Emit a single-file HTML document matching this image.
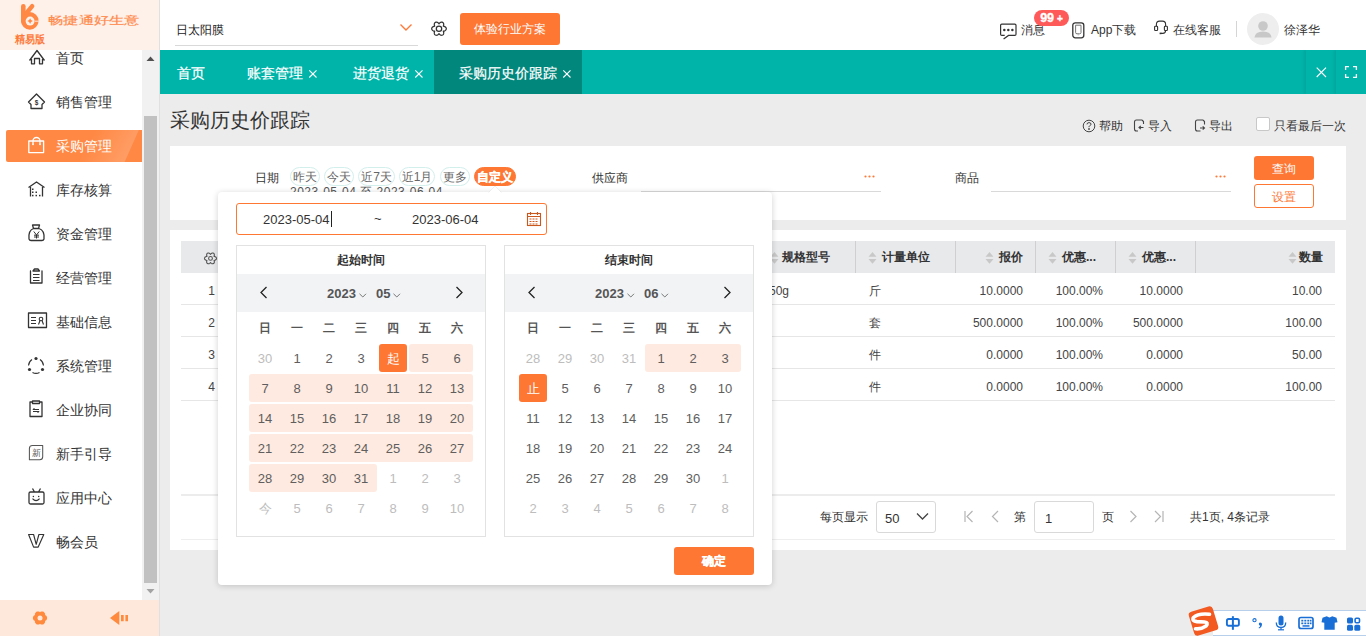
<!DOCTYPE html>
<html><head><meta charset="utf-8">
<style>
*{box-sizing:border-box;margin:0;padding:0}
html,body{width:1366px;height:636px;overflow:hidden;background:#ececec;font-family:"Liberation Sans",sans-serif;color:#333}
.a{position:absolute;white-space:nowrap}
svg{position:absolute;overflow:visible}
/* sidebar */
#sb{position:absolute;left:0;top:0;width:160px;height:636px;background:#fff;border-right:1px solid #e0e0e0}
#logo{position:absolute;left:0;top:0;width:159px;height:50px;background:#fef1ea}
.mi{position:absolute;left:56px;font-size:14px;line-height:16px;color:#333}
#act{position:absolute;left:6px;top:130px;width:136px;height:32px;border-radius:2px 0 0 2px;background:#ff8844;overflow:hidden}
#sbb{position:absolute;left:0;top:600px;width:159px;height:36px;background:#fee8dc}
/* header */
#hd{position:absolute;left:160px;top:0;width:1206px;height:50px;background:#fff}
#tabs{position:absolute;left:160px;top:50px;width:1206px;height:44px;background:#00b4a9;overflow:hidden}
.tb{position:absolute;top:15px;font-size:14px;line-height:16px;color:#fff;-webkit-text-stroke:0.2px #fff}
.panel{position:absolute;background:#fff}
.pill{position:absolute;top:167px;height:19px;border:1px solid #d2efec;border-radius:10px;font-size:12px;line-height:19px;color:#666;text-align:center}
.th{position:absolute;top:241px;height:32px;font-size:12px;font-weight:bold;line-height:32px;color:#333}
.td{position:absolute;font-size:12px;line-height:14px;color:#444}
.sep{position:absolute;top:241px;width:1px;height:32px;background:#cfcfcf}
.rowl{position:absolute;left:181px;width:1154px;height:1px;background:#e6e6e6}
.d{position:absolute;width:28px;height:28px;font-size:13px;line-height:30px;text-align:center;color:#5e5e5e}
.g{color:#bdbdbd}
.wk{position:absolute;top:320px;width:28px;font-size:12px;line-height:16px;text-align:center;color:#555;font-weight:bold}
.rng{position:absolute;height:28px;background:#feeae0;border-radius:3px}
.sel{position:absolute;width:28px;height:28px;background:#fe7733;border-radius:3px}
</style></head><body>

<!-- SIDEBAR -->
<div id="sb">
  <div id="logo">
    <svg width="160" height="50" style="left:0;top:0">
      <circle cx="29.8" cy="20.9" r="8.8" fill="#ff8844"/>
      <path d="M23.3 6.3 V21" stroke="#ff8844" stroke-width="4.6" stroke-linecap="round"/>
      <path d="M26.5 13 L32.2 6.2" stroke="#ff8844" stroke-width="4.4" stroke-linecap="round"/>
      <circle cx="30.1" cy="21.1" r="4.5" fill="#fef1ea"/>
      <path d="M38.8 21.2 H35" stroke="#fef1ea" stroke-width="0.9"/>
      <path d="M30.1 18.3 Q30.6 20.6 32.9 21.1 Q30.6 21.6 30.1 23.9 Q29.6 21.6 27.3 21.1 Q29.6 20.6 30.1 18.3Z" fill="#ff8844"/>
    </svg>
    <div class="a" style="left:48px;top:12px;font-size:15.3px;line-height:16px;font-weight:500;color:#ff8a4c;letter-spacing:0.3px;-webkit-text-stroke:0.25px #ff8a4c;transform:scaleY(0.72);transform-origin:0 50%">畅捷通好生意</div>
    <div class="a" style="left:15px;top:33px;font-size:9.8px;line-height:13px;font-weight:bold;color:#ff7a3a;transform:scaleY(1.1);transform-origin:0 50%">精易版</div>
  </div>
  <div id="act">
    <div style="position:absolute;left:0;top:0;width:136px;height:32px;background:linear-gradient(120deg,rgba(255,255,255,0) 58%,rgba(255,255,255,0.22) 95%);clip-path:polygon(0 0,132.8px 0,118.6px 32px,0 32px)"></div>
  </div>
  <!-- icons -->
  <svg width="160" height="560" style="left:0;top:40px" fill="none" stroke="#333" stroke-width="1.3" stroke-linejoin="round">
    <!-- home y50-64 -->
    <path d="M29.5 20.5 L37 10.5 L44.5 20.5 M31.5 19 V23.8 H34.5 V18.5 H39.5 V23.8 H42.5 V19" transform="translate(0,0)"/>
    <!-- shop 94-108 -->
    <path d="M28.5 62 L36.5 54 L44.5 62 L42 64.5 L42 68.5 L31 68.5 L31 64.5 Z"/>
    <text x="36.5" y="64.5" font-size="6.5" fill="#333" stroke="none" text-anchor="middle" font-weight="bold" font-family="Liberation Sans">$</text>
    <!-- bag (white) -->
    <path d="M28.8 101 H43.6 V112.6 H28.8 Z M33 104 V101 A3.5 3.5 0 0 1 40 101 V104" stroke="#fff"/><circle cx="33" cy="104.3" r="0.9" fill="#fff" stroke="none"/><circle cx="40" cy="104.3" r="0.9" fill="#fff" stroke="none"/>
    <g transform="translate(0,-3)"><!-- warehouse 181-197 -->
    <path d="M28.5 150.5 L36.5 145 L44.5 150.5 M30.5 150 V159.5 M42.5 150 V159.5" />
    <g fill="#333" stroke="none"><rect x="32" y="151.5" width="1.5" height="1.5"/><rect x="32" y="154.5" width="1.5" height="1.5"/><rect x="35.5" y="154.5" width="1.5" height="1.5"/><rect x="32" y="157.8" width="1.5" height="1.5"/><rect x="35.5" y="157.8" width="1.5" height="1.5"/><rect x="39" y="157.8" width="1.5" height="1.5"/></g>
    </g><!-- money bag 225-241 -->
    <path d="M32.5 185 H39.5 L38.5 188.5 H33.5 Z M33.5 188.5 C29 190 28.5 194 29 199 Q29.5 200.5 31 200.5 H42 Q43.5 200.5 44 199 C44.5 194 44 190 39 188.5"/>
    <path d="M33.8 191.5 L36.5 195 L39.2 191.5 M36.5 195 V198.5 M34 195.2 H39 M34 197 H39" stroke-width="1"/>
    <!-- clipboard 269-285 -->
    <path d="M31 231 H30.5 V243 H42 V231 H41.5 M33 231 L34.5 229 H38 L39.5 231 Z"/>
    <path d="M33 234.5 H39.5 M33 237.5 H39.5 M33 240.5 H39.5" stroke-width="1.1"/>
    <!-- id card -->
    <path d="M28.5 273 H46.5 V287.5 H28.5 Z"/>
    <path d="M31 277.5 H36 M31 280.5 H36 M31 283.5 H36" stroke-width="1.1"/>
    <circle cx="41" cy="279" r="1.8" stroke-width="1.1"/><path d="M38.5 284.5 L40 280.5 M43.5 284.5 L42 280.5" stroke-width="1.1"/>
    <!-- system -->
    <g fill="#333" stroke="none"><circle cx="36" cy="318.5" r="1.6"/><circle cx="29.5" cy="329.5" r="1.6"/><circle cx="42.5" cy="329.5" r="1.6"/></g>
    <path d="M32 319.5 A8 8 0 0 0 28.5 325.5 M40 319.5 A8 8 0 0 1 43.5 325.5 M32.5 332.5 Q36 334.3 39.5 332.5" stroke-width="1.1"/>
    <!-- enterprise clipboard -->
    <path d="M32.5 362 H30 V376.5 H42 V362 H39.5 M32.5 361 H39.5 V363.5 H32.5 Z"/>
    <path d="M33 369.5 H39 M34.5 368 L33 369.5 M33 371.5 H39 L37.5 373" stroke-width="1"/>
    <g transform="translate(0,3)"><!-- new -->
    <path d="M29.4 405.5 A3 3 0 0 1 32.4 402.5 H42.7 V413.7 A3 3 0 0 1 39.7 416.7 H29.4 Z" stroke="#555" stroke-width="1.05"/>
    <text x="36.1" y="413.3" font-size="8.5" fill="#555" stroke="none" text-anchor="middle" font-family="Liberation Sans">新</text>
    </g><g transform="translate(0,4)"><!-- app tv -->
    <path d="M30.5 448 H42.5 Q44 448 44 449.5 V458.5 Q44 460 42.5 460 H30.5 Q29 460 29 458.5 V449.5 Q29 448 30.5 448 Z M32.5 444.5 L34.5 448 M40.5 444.5 L38.5 448"/>
    <circle cx="33.4" cy="452.4" r="0.75" fill="#333" stroke="none"/><circle cx="38.7" cy="452.4" r="0.75" fill="#333" stroke="none"/><path d="M32.5 454.6 Q36 458.6 39.6 454.6" stroke-width="1.1"/>
    </g><g transform="translate(0,4.5)"><!-- V -->
    <path d="M28.6 490 H33.6 L36.2 499.8 L38.9 490 H43.8 L38.2 502.6 H33.6 Z" stroke-width="1.15"/>
  </g></svg>
  <div class="mi" style="top:50px">首页</div>
  <div class="mi" style="top:94px">销售管理</div>
  <div class="mi" style="top:138px;color:#fff">采购管理</div>
  <div class="mi" style="top:182px">库存核算</div>
  <div class="mi" style="top:226px">资金管理</div>
  <div class="mi" style="top:270px">经营管理</div>
  <div class="mi" style="top:314px">基础信息</div>
  <div class="mi" style="top:358px">系统管理</div>
  <div class="mi" style="top:402px">企业协同</div>
  <div class="mi" style="top:446px">新手引导</div>
  <div class="mi" style="top:490px">应用中心</div>
  <div class="mi" style="top:534px">畅会员</div>
  <!-- scrollbar -->
  <div style="position:absolute;left:142px;top:50px;width:17px;height:550px;background:#f1f1f1"></div>
  <div style="position:absolute;left:144px;top:116px;width:13px;height:467px;background:#c1c1c1"></div>
  <svg width="17" height="550" style="left:142px;top:50px"><path d="M4.5 11 L8.5 6.5 L12.5 11Z" fill="#505050"/><path d="M4.5 539 L8.5 543.5 L12.5 539Z" fill="#a3a3a3"/></svg>
  <div id="sbb">
    <svg width="159" height="36" style="left:0;top:0">
      <path d="M47.10 18.00 L47.04 17.38 L46.88 16.79 L46.60 16.23 L46.22 15.74 L45.72 15.33 L44.92 15.16 L45.17 14.38 L45.07 13.75 L44.83 13.17 L44.49 12.65 L44.06 12.21 L43.55 11.85 L42.99 11.59 L42.39 11.44 L41.77 11.40 L41.15 11.48 L40.55 11.71 L40.00 12.32 L39.45 11.71 L38.85 11.48 L38.23 11.40 L37.61 11.44 L37.01 11.59 L36.45 11.85 L35.94 12.21 L35.51 12.65 L35.17 13.17 L34.93 13.75 L34.83 14.38 L35.08 15.16 L34.28 15.33 L33.78 15.74 L33.40 16.23 L33.12 16.79 L32.96 17.38 L32.90 18.00 L32.96 18.62 L33.12 19.21 L33.40 19.77 L33.78 20.26 L34.28 20.67 L35.08 20.84 L34.83 21.62 L34.93 22.25 L35.17 22.83 L35.51 23.35 L35.94 23.79 L36.45 24.15 L37.01 24.41 L37.61 24.56 L38.23 24.60 L38.85 24.52 L39.45 24.29 L40.00 23.68 L40.55 24.29 L41.15 24.52 L41.77 24.60 L42.39 24.56 L42.99 24.41 L43.55 24.15 L44.06 23.79 L44.49 23.35 L44.83 22.83 L45.07 22.25 L45.17 21.62 L44.92 20.84 L45.72 20.67 L46.22 20.26 L46.60 19.77 L46.88 19.21 L47.04 18.62Z" fill="#ff8a3d"/>
      <circle cx="40" cy="18" r="2.5" fill="#fee8dc"/>
      <path d="M110 18 L119.3 11 V25 Z M121 15 H123.7 V21.3 H121Z M125.4 15 H128 V21.3 H125.4Z" fill="#ff8a3d"/>
    </svg>
  </div>
</div>

<!-- HEADER -->
<div id="hd">
  <div class="a" style="left:16px;top:22px;font-size:12px;line-height:16px;color:#222">日太阳膜</div>
  <div style="position:absolute;left:15px;top:45px;width:243px;height:1px;background:#d9d9d9"></div>
  <svg width="20" height="20" style="left:240px;top:20px"><path d="M0.5 4.5 L6 10 L11.5 4.5" fill="none" stroke="#ff7a3a" stroke-width="1.4"/></svg>
  <svg width="20" height="20" style="left:269px;top:19px" fill="none" stroke="#333" stroke-width="1.25" stroke-linejoin="round"><path d="M17.30 9.70 L17.19 9.07 L16.88 8.49 L16.39 7.99 L15.76 7.60 L15.05 7.35 L14.30 7.22 L14.56 6.51 L14.70 5.76 L14.68 5.02 L14.49 4.35 L14.14 3.79 L13.65 3.38 L13.05 3.16 L12.39 3.13 L11.71 3.31 L11.06 3.66 L10.49 4.15 L10.00 4.74 L9.51 4.15 L8.94 3.66 L8.29 3.31 L7.61 3.13 L6.95 3.16 L6.35 3.38 L5.86 3.79 L5.51 4.35 L5.32 5.02 L5.30 5.76 L5.44 6.51 L5.70 7.22 L4.95 7.35 L4.24 7.60 L3.61 7.99 L3.12 8.49 L2.81 9.07 L2.70 9.70 L2.81 10.33 L3.12 10.91 L3.61 11.41 L4.24 11.80 L4.95 12.05 L5.70 12.18 L5.44 12.89 L5.30 13.64 L5.32 14.38 L5.51 15.05 L5.86 15.61 L6.35 16.02 L6.95 16.24 L7.61 16.27 L8.29 16.09 L8.94 15.74 L9.51 15.25 L10.00 14.66 L10.49 15.25 L11.06 15.74 L11.71 16.09 L12.39 16.27 L13.05 16.24 L13.65 16.02 L14.14 15.61 L14.49 15.05 L14.68 14.38 L14.70 13.64 L14.56 12.89 L14.30 12.18 L15.05 12.05 L15.76 11.80 L16.39 11.41 L16.88 10.91 L17.19 10.33Z"/><circle cx="10" cy="9.7" r="2.7"/></svg>
  <div style="position:absolute;left:300px;top:13px;width:100px;height:32px;border-radius:3px;background:#fe7733;color:#fff;font-size:12px;line-height:32px;text-align:center">体验行业方案</div>
  <!-- right -->
  <svg width="24" height="24" style="left:836px;top:18px" fill="none" stroke="#333" stroke-width="1.2">
    <path d="M8.7 17.4 H5.8 Q4.6 17.4 4.6 16.2 V7.3 Q4.6 6.1 5.8 6.1 H18.8 Q20 6.1 20 7.3 V16.2 Q20 17.4 18.8 17.4 H12.5 L7.6 21"/>
    <g fill="#333" stroke="none"><circle cx="8.3" cy="12.1" r="1.25"/><circle cx="12.3" cy="12.1" r="1.25"/><circle cx="16.4" cy="12.1" r="1.25"/></g>
  </svg>
  <div class="a" style="left:861px;top:22px;font-size:12px;line-height:16px;color:#333">消息</div>
  <div style="position:absolute;left:874px;top:10px;width:35px;height:16px;border-radius:8px;background:#ff5a5a;color:#fff;font-size:12.5px;font-weight:bold;line-height:16px;text-align:center;letter-spacing:-0.2px;-webkit-text-stroke:0.35px #fff">99 <span style="font-size:10px">+</span></div>
  <svg width="16" height="20" style="left:912px;top:22px" fill="none" stroke="#333" stroke-width="1.3">
    <rect x="0.8" y="0.8" width="11" height="15" rx="2.5"/>
    <path d="M3.6 3.2 H9 V10.5 Q9 11.8 7.6 11.8 H5 Q3.6 11.8 3.6 10.5 Z" fill="none" stroke="#666" stroke-width="0.9"/><path d="M5.6 12.8 H7" stroke="#aaa" stroke-width="0.8"/>
  </svg>
  <div class="a" style="left:931px;top:22px;font-size:12px;line-height:16px;color:#333">App下载</div>
  <svg width="22" height="24" style="left:990px;top:16px" fill="none" stroke="#333" stroke-width="1.1">
    <path d="M6.4 10.3 V8.2 Q6.4 5.1 9.5 5.1 H12.5 Q15.6 5.1 15.6 8.2 V10.3"/>
    <rect x="4.6" y="10.3" width="3" height="4.2" rx="0.8"/><rect x="14.4" y="10.3" width="3" height="4.2" rx="0.8"/>
    <path d="M15.6 14.5 Q15.6 17.4 12.8 17.4 H11"/>
    <rect x="9.6" y="16.6" width="1.8" height="1.6" fill="#333" stroke="none"/>
  </svg>
  <div class="a" style="left:1013px;top:22px;font-size:12px;line-height:16px;color:#333">在线客服</div>
  <div style="position:absolute;left:1076px;top:21px;width:1px;height:16px;background:#d5d5d5"></div>
  <div style="position:absolute;left:1087px;top:13px;width:32px;height:32px;border-radius:50%;background:#eeeeee;overflow:hidden">
    <svg width="32" height="32" style="left:0;top:0"><circle cx="16" cy="13" r="4.8" fill="#c8c8c8"/><path d="M7.5 24.5 Q8 18.5 16 18.5 Q24 18.5 24.5 24.5 Z" fill="#c8c8c8"/></svg>
  </div>
  <div class="a" style="left:1124px;top:22px;font-size:12px;line-height:16px;color:#333">徐泽华</div>
</div>
<div id="tabs">
  <div class="tb" style="left:17px">首页</div>
  <div class="tb" style="left:87px">账套管理</div>
  <svg width="10" height="10" style="left:148px;top:19px"><path d="M1.3 1.3 L8.5 8.5 M8.5 1.3 L1.3 8.5" stroke="#fff" stroke-width="1.1"/></svg>
  <div class="tb" style="left:193px">进货退货</div>
  <svg width="10" height="10" style="left:254px;top:19px"><path d="M1.3 1.3 L8.5 8.5 M8.5 1.3 L1.3 8.5" stroke="#fff" stroke-width="1.1"/></svg>
  <div style="position:absolute;left:274px;top:0;width:148px;height:44px;background:#02877d"></div>
  <div class="tb" style="left:299px">采购历史价跟踪</div>
  <svg width="10" height="10" style="left:401.5px;top:19px"><path d="M1.3 1.3 L8.5 8.5 M8.5 1.3 L1.3 8.5" stroke="#fff" stroke-width="1.1"/></svg>
  <div style="position:absolute;left:1146px;top:0;width:61px;height:44px;box-shadow:-2px 0 3px rgba(0,0,0,0.08);background:#00b4a9"></div>
  <div style="position:absolute;left:1176px;top:0;width:31px;height:44px;box-shadow:-2px 0 3px rgba(0,0,0,0.08);background:#00b4a9"></div>
  <svg width="12" height="12" style="left:1156px;top:17px"><path d="M0.7 0.7 L10 10 M10 0.7 L0.7 10" stroke="#fff" stroke-width="1.1"/></svg>
  <svg width="14" height="14" style="left:1185px;top:16px" fill="none" stroke="#fff" stroke-width="1.3"><path d="M0.6 4 V0.6 H4 M8 0.6 H11.4 V4 M11.4 8 V11.4 H8 M4 11.4 H0.6 V8"/></svg>
</div>

<!-- CONTENT -->
<div class="a" style="left:170px;top:108px;font-size:20px;line-height:24px;color:#333">采购历史价跟踪</div>
<svg width="14" height="14" style="left:1082px;top:119px" fill="none" stroke="#444" stroke-width="1"><circle cx="7" cy="7" r="5.8"/><path d="M5 5.4 Q5 3.6 7 3.6 Q9 3.6 9 5.2 Q9 6.3 7.6 6.8 Q7 7.1 7 8.2" /><circle cx="7" cy="10" r="0.5" fill="#444"/></svg>
<div class="a" style="left:1099px;top:119px;font-size:12px;line-height:14px;color:#333">帮助</div>
<svg width="14" height="16" style="left:1133px;top:118px" fill="none" stroke="#444" stroke-width="1.1"><path d="M9 2 H3.5 Q1.5 2 1.5 4 V11 Q1.5 13 3.5 13 H5 M9 2 L10.5 3.5 V6" /><path d="M10.5 9.5 H6 M7.8 7.8 L6 9.5 L7.8 11.2"/></svg>
<div class="a" style="left:1148px;top:119px;font-size:12px;line-height:14px;color:#333">导入</div>
<svg width="14" height="16" style="left:1194px;top:118px" fill="none" stroke="#444" stroke-width="1.1"><path d="M9 2 H3.5 Q1.5 2 1.5 4 V11 Q1.5 13 3.5 13 H6.5 M9 2 L10.5 3.5 V6.5" /><path d="M6 10 H10.5 M8.7 8.3 L10.5 10 L8.7 11.7"/></svg>
<div class="a" style="left:1209px;top:119px;font-size:12px;line-height:14px;color:#333">导出</div>
<div style="position:absolute;left:1256px;top:117px;width:14px;height:14px;border:1px solid #c8c8c8;border-radius:2px;background:#fff"></div>
<div class="a" style="left:1274px;top:119px;font-size:12px;line-height:14px;color:#333">只看最后一次</div>

<!-- filter panel -->
<div class="panel" style="left:170px;top:146px;width:1176px;height:74px">
  <div class="a" style="left:85px;top:25px;font-size:12px;line-height:14px;color:#333">日期</div>
  <div class="a" style="left:120px;top:39px;font-size:12px;line-height:14px;color:#555;letter-spacing:0.5px">2023-05-04 至 2023-06-04</div>
  <div class="a" style="left:422px;top:25px;font-size:12px;line-height:14px;color:#333">供应商</div>
  <div style="position:absolute;left:471px;top:45px;width:240px;height:1px;background:#d9d9d9"></div>
  <svg width="14" height="4" style="left:694px;top:29px"><g fill="#ff7a3a"><circle cx="1.5" cy="1.5" r="1.1"/><circle cx="5.5" cy="1.5" r="1.1"/><circle cx="9.5" cy="1.5" r="1.1"/></g></svg>
  <div class="a" style="left:785px;top:25px;font-size:12px;line-height:14px;color:#333">商品</div>
  <div style="position:absolute;left:821px;top:45px;width:240px;height:1px;background:#d9d9d9"></div>
  <svg width="14" height="4" style="left:1045px;top:29px"><g fill="#ff7a3a"><circle cx="1.5" cy="1.5" r="1.1"/><circle cx="5.5" cy="1.5" r="1.1"/><circle cx="9.5" cy="1.5" r="1.1"/></g></svg>
  <div style="position:absolute;left:1084px;top:10px;width:60px;height:24px;border-radius:3px;background:#fe7733;color:#fff;font-size:12px;line-height:27px;text-align:center">查询</div>
  <div style="position:absolute;left:1084px;top:38px;width:60px;height:24px;border-radius:3px;border:1px solid #fe7733;background:#fff;color:#fe7733;font-size:12px;line-height:25px;text-align:center">设置</div>
</div>
<div class="pill" style="left:290px;width:30px">昨天</div>
<div class="pill" style="left:324px;width:30px">今天</div>
<div class="pill" style="left:358px;width:37px">近7天</div>
<div class="pill" style="left:399px;width:36px">近1月</div>
<div class="pill" style="left:440px;width:30px">更多</div>
<div class="pill" style="left:474px;width:42px;background:#fe7733;border-color:#fe7733;color:#fff;font-weight:bold;-webkit-text-stroke:0.3px #fff">自定义</div>

<!-- table panel -->
<div class="panel" style="left:170px;top:230px;width:1176px;height:320px"></div>
<div style="position:absolute;left:181px;top:241px;width:1154px;height:32px;background:#e8e9eb"></div>
<svg width="16" height="16" style="left:202px;top:250px" fill="none" stroke="#555" stroke-width="1.1" stroke-linejoin="round"><path d="M14.50 8.40 L14.41 7.88 L14.16 7.40 L13.75 6.99 L13.24 6.68 L12.65 6.47 L12.03 6.36 L12.25 5.77 L12.36 5.16 L12.34 4.56 L12.19 4.00 L11.90 3.54 L11.50 3.20 L11.01 3.02 L10.46 3.00 L9.91 3.15 L9.38 3.44 L8.90 3.84 L8.50 4.32 L8.10 3.84 L7.62 3.44 L7.09 3.15 L6.54 3.00 L5.99 3.02 L5.50 3.20 L5.10 3.54 L4.81 4.00 L4.66 4.56 L4.64 5.16 L4.75 5.77 L4.97 6.36 L4.35 6.47 L3.76 6.68 L3.25 6.99 L2.84 7.40 L2.59 7.88 L2.50 8.40 L2.59 8.92 L2.84 9.40 L3.25 9.81 L3.76 10.12 L4.35 10.33 L4.97 10.44 L4.75 11.03 L4.64 11.64 L4.66 12.24 L4.81 12.80 L5.10 13.26 L5.50 13.60 L5.99 13.78 L6.54 13.80 L7.09 13.65 L7.62 13.36 L8.10 12.96 L8.50 12.48 L8.90 12.96 L9.38 13.36 L9.91 13.65 L10.46 13.80 L11.01 13.78 L11.50 13.60 L11.90 13.26 L12.19 12.80 L12.34 12.24 L12.36 11.64 L12.25 11.03 L12.03 10.44 L12.65 10.33 L13.24 10.12 L13.75 9.81 L14.16 9.40 L14.41 8.92Z"/><circle cx="8.5" cy="8.4" r="1.9"/></svg>
<div class="sep" style="left:855px"></div>
<div class="sep" style="left:955px"></div>
<div class="sep" style="left:1035px"></div>
<div class="sep" style="left:1115px"></div>
<div class="sep" style="left:1195px"></div>
<div class="th" style="left:782px">规格型号</div>
<div class="th" style="left:882px">计量单位</div>
<div class="th" style="left:999px">报价</div>
<div class="th" style="left:1062px">优惠...</div>
<div class="th" style="left:1142px">优惠...</div>
<div class="th" style="left:1299px">数量</div>
<svg width="10" height="16" style="left:769.5px;top:250px"><path d="M0.5 6.8 L4.5 2 L8.5 6.8Z M0.5 9 L4.5 13.8 L8.5 9Z" fill="#c8c8c8"/></svg>
<svg width="10" height="16" style="left:867.5px;top:250px"><path d="M0.5 6.8 L4.5 2 L8.5 6.8Z M0.5 9 L4.5 13.8 L8.5 9Z" fill="#c8c8c8"/></svg>
<svg width="10" height="16" style="left:984.5px;top:250px"><path d="M0.5 6.8 L4.5 2 L8.5 6.8Z M0.5 9 L4.5 13.8 L8.5 9Z" fill="#c8c8c8"/></svg>
<svg width="10" height="16" style="left:1047.5px;top:250px"><path d="M0.5 6.8 L4.5 2 L8.5 6.8Z M0.5 9 L4.5 13.8 L8.5 9Z" fill="#c8c8c8"/></svg>
<svg width="10" height="16" style="left:1127.5px;top:250px"><path d="M0.5 6.8 L4.5 2 L8.5 6.8Z M0.5 9 L4.5 13.8 L8.5 9Z" fill="#c8c8c8"/></svg>
<svg width="10" height="16" style="left:1287.5px;top:250px"><path d="M0.5 6.8 L4.5 2 L8.5 6.8Z M0.5 9 L4.5 13.8 L8.5 9Z" fill="#c8c8c8"/></svg>

<div class="rowl" style="top:304px"></div>
<div class="rowl" style="top:336px"></div>
<div class="rowl" style="top:368px"></div>
<div class="rowl" style="top:400px"></div>
<div class="td" style="left:201px;top:284px;width:14px;text-align:right">1</div>
<div class="td" style="left:769px;top:284px">50g</div>
<div class="td" style="left:869px;top:284px">斤</div>
<div class="td" style="left:923px;top:284px;width:100px;text-align:right">10.0000</div>
<div class="td" style="left:1003px;top:284px;width:100px;text-align:right">100.00%</div>
<div class="td" style="left:1083px;top:284px;width:100px;text-align:right">10.0000</div>
<div class="td" style="left:1222px;top:284px;width:100px;text-align:right">10.00</div>
<div class="td" style="left:201px;top:316px;width:14px;text-align:right">2</div>
<div class="td" style="left:869px;top:316px">套</div>
<div class="td" style="left:923px;top:316px;width:100px;text-align:right">500.0000</div>
<div class="td" style="left:1003px;top:316px;width:100px;text-align:right">100.00%</div>
<div class="td" style="left:1083px;top:316px;width:100px;text-align:right">500.0000</div>
<div class="td" style="left:1222px;top:316px;width:100px;text-align:right">100.00</div>
<div class="td" style="left:201px;top:348px;width:14px;text-align:right">3</div>
<div class="td" style="left:869px;top:348px">件</div>
<div class="td" style="left:923px;top:348px;width:100px;text-align:right">0.0000</div>
<div class="td" style="left:1003px;top:348px;width:100px;text-align:right">100.00%</div>
<div class="td" style="left:1083px;top:348px;width:100px;text-align:right">0.0000</div>
<div class="td" style="left:1222px;top:348px;width:100px;text-align:right">50.00</div>
<div class="td" style="left:201px;top:380px;width:14px;text-align:right">4</div>
<div class="td" style="left:869px;top:380px">件</div>
<div class="td" style="left:923px;top:380px;width:100px;text-align:right">0.0000</div>
<div class="td" style="left:1003px;top:380px;width:100px;text-align:right">100.00%</div>
<div class="td" style="left:1083px;top:380px;width:100px;text-align:right">0.0000</div>
<div class="td" style="left:1222px;top:380px;width:100px;text-align:right">100.00</div>

<!-- pagination -->
<div class="rowl" style="top:494px;background:#ececec;height:2px"></div>
<div class="rowl" style="top:539px;background:#eeeeee"></div>
<div class="a" style="left:820px;top:510px;font-size:12px;line-height:14px;color:#333">每页显示</div>
<div style="position:absolute;left:876px;top:501px;width:60px;height:32px;border:1px solid #d9d9d9;border-radius:3px;background:#fff"></div>
<div class="a" style="left:885px;top:512px;font-size:13px;line-height:14px;color:#333">50</div>
<svg width="14" height="10" style="left:916px;top:512px"><path d="M1 1.5 L6.5 7 L12 1.5" fill="none" stroke="#444" stroke-width="1.3"/></svg>
<svg width="12" height="14" style="left:963px;top:510px" fill="none" stroke="#b5b5b5" stroke-width="1.2"><path d="M2 1 V12 M9.5 1 L4 6.5 L9.5 12"/></svg>
<svg width="12" height="14" style="left:990px;top:510px" fill="none" stroke="#b5b5b5" stroke-width="1.2"><path d="M8 1 L2.5 6.5 L8 12"/></svg>
<div class="a" style="left:1014px;top:510px;font-size:12px;line-height:14px;color:#333">第</div>
<div style="position:absolute;left:1034px;top:501px;width:60px;height:32px;border:1px solid #d9d9d9;border-radius:3px;background:#fff"></div>
<div class="a" style="left:1045px;top:512px;font-size:13px;line-height:14px;color:#333">1</div>
<div class="a" style="left:1102px;top:510px;font-size:12px;line-height:14px;color:#333">页</div>
<svg width="12" height="14" style="left:1128px;top:510px" fill="none" stroke="#b5b5b5" stroke-width="1.2"><path d="M2.5 1 L8 6.5 L2.5 12"/></svg>
<svg width="12" height="14" style="left:1153px;top:510px" fill="none" stroke="#b5b5b5" stroke-width="1.2"><path d="M2 1 L7.5 6.5 L2 12 M10 1 V12"/></svg>
<div class="a" style="left:1190px;top:510px;font-size:12px;line-height:14px;color:#333">共1页, 4条记录</div>

<!-- POPUP -->
<div style="position:absolute;left:218px;top:192px;width:554px;height:393px;background:#fff;border-radius:4px;box-shadow:0 1px 6px rgba(0,0,0,0.18)"></div>
<svg width="14" height="8" style="left:488px;top:185px"><path d="M0 8 L7 1 L14 8Z" fill="#fff"/><path d="M0.5 7.5 L7 1 L13.5 7.5" fill="none" stroke="rgba(0,0,0,0.06)" stroke-width="1"/></svg>
<div style="position:absolute;left:236px;top:203px;width:311px;height:32px;border:1px solid #fe7733;border-radius:3px;background:#fff"></div>
<div class="a" style="left:263px;top:213px;font-size:13px;line-height:14px;color:#333">2023-05-04</div>
<div style="position:absolute;left:331px;top:211px;width:1px;height:16px;background:#222"></div>
<div class="a" style="left:374px;top:212px;font-size:13px;line-height:14px;color:#333">~</div>
<div class="a" style="left:412px;top:213px;font-size:13px;line-height:14px;color:#333">2023-06-04</div>
<svg width="16" height="16" style="left:526px;top:211px" fill="none" stroke="#c9581f" stroke-width="1.1"><rect x="1.5" y="2.5" width="13" height="12"/><path d="M1.5 5.5 H14.5 M4.5 1 V4 M11.5 1 V4"/><path d="M3.5 8 H12.5 M3.5 10.5 H12.5 M3.5 13 H12.5" stroke-dasharray="2 1" /></svg>
<div style="position:absolute;left:236px;top:245px;width:250px;height:292px;border:1px solid #e2e2e2"></div>
<div style="position:absolute;left:237px;top:274px;width:248px;height:38px;background:#f2f3f5"></div>
<div class="a" style="left:236px;top:253px;width:250px;text-align:center;font-size:12px;line-height:14px;font-weight:bold;color:#333">起始时间</div>
<svg width="10" height="14" style="left:259px;top:286px"><path d="M7.5 1 L2 6.5 L7.5 12" fill="none" stroke="#222" stroke-width="1.3"/></svg>
<svg width="10" height="14" style="left:453.5px;top:286px"><path d="M2.5 1 L8 6.5 L2.5 12" fill="none" stroke="#222" stroke-width="1.3"/></svg>
<div class="a" style="left:327px;top:287px;font-size:13px;line-height:14px;font-weight:bold;color:#555">2023</div>
<svg width="8" height="6" style="left:359px;top:293px"><path d="M0.5 0.8 L3.8 4 L7 0.8" fill="none" stroke="#666" stroke-width="0.9"/></svg>
<div class="a" style="left:376px;top:287px;font-size:13px;line-height:14px;font-weight:bold;color:#555">05</div>
<svg width="8" height="6" style="left:393px;top:293px"><path d="M0.5 0.8 L3.8 4 L7 0.8" fill="none" stroke="#666" stroke-width="0.9"/></svg>
<div class="wk" style="left:251px">日</div>
<div class="wk" style="left:283px">一</div>
<div class="wk" style="left:315px">二</div>
<div class="wk" style="left:347px">三</div>
<div class="wk" style="left:379px">四</div>
<div class="wk" style="left:411px">五</div>
<div class="wk" style="left:443px">六</div>
<div class="rng" style="left:409px;top:344px;width:64px"></div>
<div class="rng" style="left:249px;top:374px;width:224px"></div>
<div class="rng" style="left:249px;top:404px;width:224px"></div>
<div class="rng" style="left:249px;top:434px;width:224px"></div>
<div class="rng" style="left:249px;top:464px;width:128px"></div>
<div class="sel" style="left:379px;top:344px"></div>
<div class="d g" style="left:251px;top:344px;">30</div>
<div class="d" style="left:283px;top:344px;">1</div>
<div class="d" style="left:315px;top:344px;">2</div>
<div class="d" style="left:347px;top:344px;">3</div>
<div class="d" style="left:379px;top:344px;color:#fff;font-size:13px">起</div>
<div class="d" style="left:411px;top:344px;">5</div>
<div class="d" style="left:443px;top:344px;">6</div>
<div class="d" style="left:251px;top:374px;">7</div>
<div class="d" style="left:283px;top:374px;">8</div>
<div class="d" style="left:315px;top:374px;">9</div>
<div class="d" style="left:347px;top:374px;">10</div>
<div class="d" style="left:379px;top:374px;">11</div>
<div class="d" style="left:411px;top:374px;">12</div>
<div class="d" style="left:443px;top:374px;">13</div>
<div class="d" style="left:251px;top:404px;">14</div>
<div class="d" style="left:283px;top:404px;">15</div>
<div class="d" style="left:315px;top:404px;">16</div>
<div class="d" style="left:347px;top:404px;">17</div>
<div class="d" style="left:379px;top:404px;">18</div>
<div class="d" style="left:411px;top:404px;">19</div>
<div class="d" style="left:443px;top:404px;">20</div>
<div class="d" style="left:251px;top:434px;">21</div>
<div class="d" style="left:283px;top:434px;">22</div>
<div class="d" style="left:315px;top:434px;">23</div>
<div class="d" style="left:347px;top:434px;">24</div>
<div class="d" style="left:379px;top:434px;">25</div>
<div class="d" style="left:411px;top:434px;">26</div>
<div class="d" style="left:443px;top:434px;">27</div>
<div class="d" style="left:251px;top:464px;">28</div>
<div class="d" style="left:283px;top:464px;">29</div>
<div class="d" style="left:315px;top:464px;">30</div>
<div class="d" style="left:347px;top:464px;">31</div>
<div class="d g" style="left:379px;top:464px;">1</div>
<div class="d g" style="left:411px;top:464px;">2</div>
<div class="d g" style="left:443px;top:464px;">3</div>
<div class="d g" style="left:251px;top:494px;">今</div>
<div class="d g" style="left:283px;top:494px;">5</div>
<div class="d g" style="left:315px;top:494px;">6</div>
<div class="d g" style="left:347px;top:494px;">7</div>
<div class="d g" style="left:379px;top:494px;">8</div>
<div class="d g" style="left:411px;top:494px;">9</div>
<div class="d g" style="left:443px;top:494px;">10</div>
<div style="position:absolute;left:504px;top:245px;width:250px;height:292px;border:1px solid #e2e2e2"></div>
<div style="position:absolute;left:505px;top:274px;width:248px;height:38px;background:#f2f3f5"></div>
<div class="a" style="left:504px;top:253px;width:250px;text-align:center;font-size:12px;line-height:14px;font-weight:bold;color:#333">结束时间</div>
<svg width="10" height="14" style="left:527px;top:286px"><path d="M7.5 1 L2 6.5 L7.5 12" fill="none" stroke="#222" stroke-width="1.3"/></svg>
<svg width="10" height="14" style="left:721.5px;top:286px"><path d="M2.5 1 L8 6.5 L2.5 12" fill="none" stroke="#222" stroke-width="1.3"/></svg>
<div class="a" style="left:595px;top:287px;font-size:13px;line-height:14px;font-weight:bold;color:#555">2023</div>
<svg width="8" height="6" style="left:627px;top:293px"><path d="M0.5 0.8 L3.8 4 L7 0.8" fill="none" stroke="#666" stroke-width="0.9"/></svg>
<div class="a" style="left:644px;top:287px;font-size:13px;line-height:14px;font-weight:bold;color:#555">06</div>
<svg width="8" height="6" style="left:661px;top:293px"><path d="M0.5 0.8 L3.8 4 L7 0.8" fill="none" stroke="#666" stroke-width="0.9"/></svg>
<div class="wk" style="left:519px">日</div>
<div class="wk" style="left:551px">一</div>
<div class="wk" style="left:583px">二</div>
<div class="wk" style="left:615px">三</div>
<div class="wk" style="left:647px">四</div>
<div class="wk" style="left:679px">五</div>
<div class="wk" style="left:711px">六</div>
<div class="rng" style="left:645px;top:344px;width:96px"></div>
<div class="sel" style="left:519px;top:374px"></div>
<div class="d g" style="left:519px;top:344px;">28</div>
<div class="d g" style="left:551px;top:344px;">29</div>
<div class="d g" style="left:583px;top:344px;">30</div>
<div class="d g" style="left:615px;top:344px;">31</div>
<div class="d" style="left:647px;top:344px;">1</div>
<div class="d" style="left:679px;top:344px;">2</div>
<div class="d" style="left:711px;top:344px;">3</div>
<div class="d" style="left:519px;top:374px;color:#fff;font-size:13px">止</div>
<div class="d" style="left:551px;top:374px;">5</div>
<div class="d" style="left:583px;top:374px;">6</div>
<div class="d" style="left:615px;top:374px;">7</div>
<div class="d" style="left:647px;top:374px;">8</div>
<div class="d" style="left:679px;top:374px;">9</div>
<div class="d" style="left:711px;top:374px;">10</div>
<div class="d" style="left:519px;top:404px;">11</div>
<div class="d" style="left:551px;top:404px;">12</div>
<div class="d" style="left:583px;top:404px;">13</div>
<div class="d" style="left:615px;top:404px;">14</div>
<div class="d" style="left:647px;top:404px;">15</div>
<div class="d" style="left:679px;top:404px;">16</div>
<div class="d" style="left:711px;top:404px;">17</div>
<div class="d" style="left:519px;top:434px;">18</div>
<div class="d" style="left:551px;top:434px;">19</div>
<div class="d" style="left:583px;top:434px;">20</div>
<div class="d" style="left:615px;top:434px;">21</div>
<div class="d" style="left:647px;top:434px;">22</div>
<div class="d" style="left:679px;top:434px;">23</div>
<div class="d" style="left:711px;top:434px;">24</div>
<div class="d" style="left:519px;top:464px;">25</div>
<div class="d" style="left:551px;top:464px;">26</div>
<div class="d" style="left:583px;top:464px;">27</div>
<div class="d" style="left:615px;top:464px;">28</div>
<div class="d" style="left:647px;top:464px;">29</div>
<div class="d" style="left:679px;top:464px;">30</div>
<div class="d g" style="left:711px;top:464px;">1</div>
<div class="d g" style="left:519px;top:494px;">2</div>
<div class="d g" style="left:551px;top:494px;">3</div>
<div class="d g" style="left:583px;top:494px;">4</div>
<div class="d g" style="left:615px;top:494px;">5</div>
<div class="d g" style="left:647px;top:494px;">6</div>
<div class="d g" style="left:679px;top:494px;">7</div>
<div class="d g" style="left:711px;top:494px;">8</div>

<div style="position:absolute;left:674px;top:547px;width:80px;height:28px;border-radius:3px;background:#fe7733;color:#fff;font-size:12px;font-weight:bold;line-height:28px;text-align:center;-webkit-text-stroke:0.3px #fff">确定</div>


<!-- IME -->
<div style="position:absolute;left:1213px;top:610px;width:154px;height:26px;border:1px solid #b7cfea;border-left:none;border-bottom:none;background:#fff"></div>
<div style="position:absolute;left:1213px;top:635px;width:154px;height:1px;background:#b7cfea"></div>
<svg width="40" height="34" style="left:1184px;top:602px">
  <g transform="rotate(-17 19.5 19)"><rect x="7" y="6.5" width="25" height="25" rx="3.5" fill="#f25a22"/></g>
  <path d="M25.5 12.2 Q14 11 9.5 15.5 Q7.5 19 13 19.6 L20.5 20 Q25 20.4 22 24 Q17 27.5 11.5 26.8" fill="none" stroke="#fff" stroke-width="3.6" stroke-linecap="round"/>
</svg>
<svg width="150" height="22" style="left:1222px;top:614px" fill="#1a6fd6">
  <rect x="4.9" y="5" width="12" height="6.8" rx="1.8" fill="none" stroke="#1a6fd6" stroke-width="1.9"/>
  <rect x="9.9" y="2.2" width="2" height="13.6"/>
  <circle cx="32.5" cy="6.2" r="1.6" fill="none" stroke="#1a6fd6" stroke-width="1.1"/>
  <path d="M38 8.5 Q40 8.5 40 10 Q40 13 37 14.5 L36.6 13.8 Q38.2 12.8 38.2 11.5 Q36.8 11.5 36.8 10 Q36.8 8.5 38 8.5Z"/>
  <rect x="56.5" y="1.5" width="5" height="10" rx="2.5"/>
  <path d="M54.3 8.5 Q54.3 13.5 59 13.5 Q63.7 13.5 63.7 8.5" fill="none" stroke="#1a6fd6" stroke-width="1.3"/>
  <rect x="58.4" y="13.5" width="1.2" height="2.2"/><rect x="56" y="15.2" width="6" height="1.2"/>
  <rect x="77" y="3.5" width="14" height="11" rx="2" fill="none" stroke="#1a6fd6" stroke-width="1.7"/>
  <g><rect x="79.3" y="5.8" width="2" height="1.7"/><rect x="82.3" y="5.8" width="2" height="1.7"/><rect x="85.3" y="5.8" width="2" height="1.7"/><rect x="88" y="5.8" width="1.5" height="1.7"/>
  <rect x="79.3" y="8.5" width="2" height="1.7"/><rect x="82.3" y="8.5" width="2" height="1.7"/><rect x="85.3" y="8.5" width="2" height="1.7"/><rect x="88" y="8.5" width="1.5" height="1.7"/>
  <rect x="80.5" y="11.2" width="7" height="1.5"/></g>
  <path d="M100.5 3.8 L104.8 2.3 Q107.5 4.5 110.2 2.3 L114.5 3.8 L115.5 8.3 L112.7 8.8 V15.8 H102.3 V8.8 L99.5 8.3Z"/>
  <rect x="125" y="3.5" width="6" height="6" rx="1.6"/><rect x="125" y="10.8" width="6" height="6" rx="1.6"/><rect x="132.3" y="10.8" width="6" height="6" rx="1.6"/>
  <rect x="133.1" y="4.3" width="4.4" height="4.4" rx="1.2" fill="none" stroke="#1a6fd6" stroke-width="1.6"/>
</svg>
</body></html>
